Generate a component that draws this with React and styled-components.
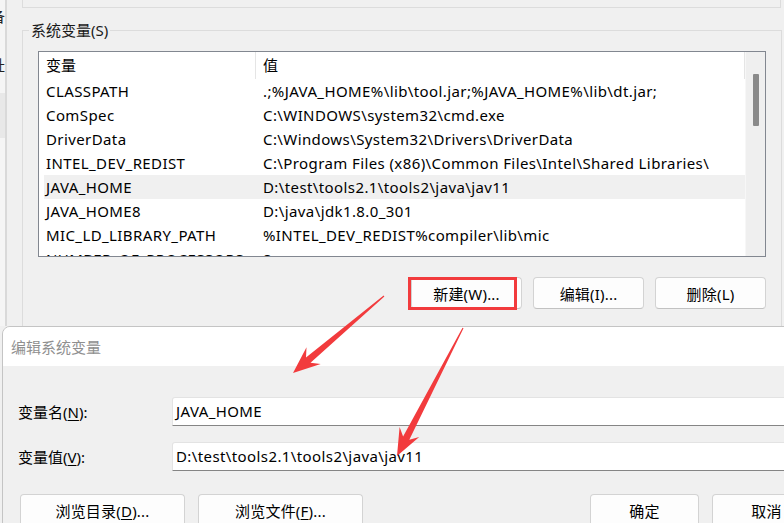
import React from "react";
import styled, { createGlobalStyle } from "styled-components";

const GlobalStyle = createGlobalStyle`
  html, body {
    margin: 0;
    padding: 0;
    background: #f0f0f0;
  }
  body {
    font-family: "Noto Sans", "Noto Sans CJK SC", sans-serif;
    font-size: 15px;
    color: #000;
    overflow: hidden;
  }
`;

const vars = [
  ["CLASSPATH", ".;%JAVA_HOME%\\lib\\tool.jar;%JAVA_HOME%\\lib\\dt.jar;"],
  ["ComSpec", "C:\\WINDOWS\\system32\\cmd.exe"],
  ["DriverData", "C:\\Windows\\System32\\Drivers\\DriverData"],
  ["INTEL_DEV_REDIST", "C:\\Program Files (x86)\\Common Files\\Intel\\Shared Libraries\\"],
  ["JAVA_HOME", "D:\\test\\tools2.1\\tools2\\java\\jav11"],
  ["JAVA_HOME8", "D:\\java\\jdk1.8.0_301"],
  ["MIC_LD_LIBRARY_PATH", "%INTEL_DEV_REDIST%compiler\\lib\\mic"],
  ["NUMBER_OF_PROCESSORS", "8"],
];

// builds a tapered arrow (thin tail, wide head) from tail to tip
const arrowPoints = (tx, ty, px, py) => {
  const dx = px - tx;
  const dy = py - ty;
  const len = Math.hypot(dx, dy);
  const ux = dx / len;
  const uy = dy / len;
  const nx = -uy;
  const ny = ux;
  const at = (d, w) => [px - ux * d + nx * w, py - uy * d + ny * w];
  const pts = [
    at(len, 0.6),
    at(20, 3.5),
    at(27, 11),
    [px, py],
    at(27, -11),
    at(20, -3.5),
    at(len, -0.6),
  ];
  return pts.map((p) => p.map((v) => v.toFixed(1)).join(",")).join(" ");
};

const App = () => {
  return (
    <>
      <GlobalStyle />
      <Screen>
        <MainWindow>
          <BehindStrip>
            <BehindChar>备</BehindChar>
            <BehindChar>址</BehindChar>
            <BehindHover />
          </BehindStrip>
          <MainBody>
            <TopBox />
            <GroupBox>
              <Legend>系统变量(S)</Legend>
              <ListBox>
                <ListArea>
                  <HeaderRow>
                    <HeaderCell>变量</HeaderCell>
                    <HeaderCell $last>值</HeaderCell>
                  </HeaderRow>
                  {vars.map(([name, value]) => (
                    <Row key={name} $selected={name === "JAVA_HOME"}>
                      <NameCell>{name}</NameCell>
                      <ValueCell>{value}</ValueCell>
                    </Row>
                  ))}
                </ListArea>
                <ScrollTrack>
                  <ScrollThumb />
                </ScrollTrack>
              </ListBox>
              <ButtonRow>
                <WinButton $w={111}>新建(W)...</WinButton>
                <WinButton $w={111}>编辑(I)...</WinButton>
                <WinButton $w={111}>删除(L)</WinButton>
              </ButtonRow>
            </GroupBox>
          </MainBody>
        </MainWindow>

        <EditDialog>
          <TitleBar>编辑系统变量</TitleBar>
          <DialogBody>
            <FieldGrid>
              <FieldLabel>
                变量名(<u>N</u>):
              </FieldLabel>
              <TextInput>JAVA_HOME</TextInput>
              <FieldLabel>
                变量值(<u>V</u>):
              </FieldLabel>
              <TextInput>D:\test\tools2.1\tools2\java\jav11</TextInput>
            </FieldGrid>
            <DialogButtons>
              <ButtonGroup>
                <WinButton $w={165}>
                  浏览目录(<u>D</u>)...
                </WinButton>
                <WinButton $w={165}>
                  浏览文件(<u>F</u>)...
                </WinButton>
              </ButtonGroup>
              <ButtonGroup>
                <WinButton $w={109}>确定</WinButton>
                <WinButton $w={109}>取消</WinButton>
              </ButtonGroup>
            </DialogButtons>
          </DialogBody>
        </EditDialog>

        <Annotations viewBox="0 0 784 523">
          <rect x="409.5" y="278.5" width="106" height="30" fill="none" stroke="#f23b3d" strokeWidth="3" />
          <polygon points={arrowPoints(384, 296, 293, 373)} fill="#f23b3d" />
          <polygon points={arrowPoints(463, 328, 397, 456)} fill="#f23b3d" />
        </Annotations>
      </Screen>
    </>
  );
};

export default App;

const Screen = styled.div`
  position: relative;
  width: 784px;
  height: 523px;
  overflow: hidden;
  background: #f0f0f0;
`;

const MainWindow = styled.div`
  display: flex;
  height: 326px;
  overflow: hidden;
`;

const BehindStrip = styled.div`
  width: 5px;
  flex-shrink: 0;
  display: flex;
  flex-direction: column;
  background: #f5f5f5;
  border-right: 2px solid #d9d9d9;
  overflow: hidden;
  padding-top: 6px;
`;

const BehindChar = styled.div`
  margin-left: -10px;
  height: 20px;
  line-height: 20px;
  margin-bottom: 29px;
  font-size: 15px;
  color: #222;
`;

const BehindHover = styled.div`
  height: 45px;
  margin-top: -11px;
  background: #e8e8e8;
`;

const MainBody = styled.div`
  flex: 1;
  display: flex;
  flex-direction: column;
  padding: 0 2px 0 15px;
  min-width: 0;
`;

const TopBox = styled.div`
  height: 7px;
  margin-right: 1px;
  border: 1px solid #dcdcdc;
  border-top: none;
  flex-shrink: 0;
`;

const GroupBox = styled.fieldset`
  margin: 12px 0 0 0;
  padding: 0 15px 0 15px;
  border: 1px solid #dcdcdc;
  border-bottom: none;
  min-width: 0;
  flex: 1;
`;

const Legend = styled.legend`
  margin-left: -9px;
  padding: 0 2px;
  height: 20px;
  line-height: 20px;
  font-size: 15px;
  color: #1a1a1a;
`;

const ListBox = styled.div`
  margin-top: 11px;
  height: 204px;
  display: flex;
  border: 1px solid #828790;
  background: #fff;
  overflow: hidden;
`;

const ListArea = styled.div`
  flex: 1;
  padding-left: 5px;
  overflow: hidden;
  min-width: 0;
`;

const HeaderRow = styled.div`
  display: grid;
  grid-template-columns: 212px 1fr;
  height: 27px;
`;

const HeaderCell = styled.div`
  padding-left: ${(p) => (p.$last ? "7px" : "2px")};
  line-height: 27px;
  border-right: 1px solid #e5e5e5;
  white-space: nowrap;
`;

const Row = styled.div`
  display: grid;
  grid-template-columns: 212px 1fr;
  height: 24px;
  line-height: 24px;
  letter-spacing: 0.4px;
  background: ${(p) => (p.$selected ? "#f0f0f0" : "transparent")};
  white-space: nowrap;
`;

const NameCell = styled.div`
  padding-left: 2px;
  overflow: hidden;
`;

const ValueCell = styled.div`
  padding-left: 7px;
  overflow: hidden;
`;

const ScrollTrack = styled.div`
  width: 19px;
  flex-shrink: 0;
  background: #efefef;
  border-left: 1px solid #f7f7f7;
  display: flex;
  justify-content: center;
  padding-top: 22px;
`;

const ScrollThumb = styled.div`
  width: 6px;
  height: 52px;
  background: #8a8a8a;
  border-radius: 1px;
`;

const ButtonRow = styled.div`
  display: flex;
  justify-content: flex-end;
  gap: 11px;
  margin-top: 20px;
`;

const WinButton = styled.button`
  width: ${(p) => p.$w}px;
  height: 32px;
  flex-shrink: 0;
  background: #fdfdfd;
  border: 1px solid #d3d3d3;
  border-bottom-color: #c2c2c2;
  border-radius: 4px;
  font-family: "Noto Sans", "Noto Sans CJK SC", sans-serif;
  font-size: 15px;
  letter-spacing: 0.2px;
  color: #000;
  padding: 0;

  u {
    text-underline-offset: 2px;
  }
`;

const EditDialog = styled.div`
  width: 840px;
  margin-left: 2px;
  border: 1px solid #c4c4c4;
  border-top-left-radius: 8px;
  background: #f0f0f0;
  overflow: hidden;
  height: 220px;
`;

const TitleBar = styled.div`
  height: 39px;
  background: #fff;
  padding-left: 8px;
  line-height: 41px;
  font-size: 15px;
  color: #8f8f8f;
`;

const DialogBody = styled.div`
  padding-top: 31px;
`;

const FieldGrid = styled.div`
  display: grid;
  grid-template-columns: 154px 1fr;
  row-gap: 16px;
  padding-left: 15px;
  align-items: center;
`;

const FieldLabel = styled.div`
  font-size: 15px;
  line-height: 20px;

  u {
    text-underline-offset: 2px;
  }
`;

const TextInput = styled.div`
  height: 27px;
  line-height: 27px;
  background: #fff;
  border: 1px solid #e3e3e3;
  border-bottom: 1px solid #858585;
  border-radius: 3px 0 0 0;
  padding-left: 3px;
  letter-spacing: 0.4px;
  white-space: nowrap;
`;

const DialogButtons = styled.div`
  display: flex;
  justify-content: space-between;
  padding: 0 22px 0 17px;
  margin-top: 23px;
`;

const ButtonGroup = styled.div`
  display: flex;
  gap: 13px;
`;

const Annotations = styled.svg`
  position: absolute;
  left: 0;
  top: 0;
  width: 784px;
  height: 523px;
  pointer-events: none;
`;
